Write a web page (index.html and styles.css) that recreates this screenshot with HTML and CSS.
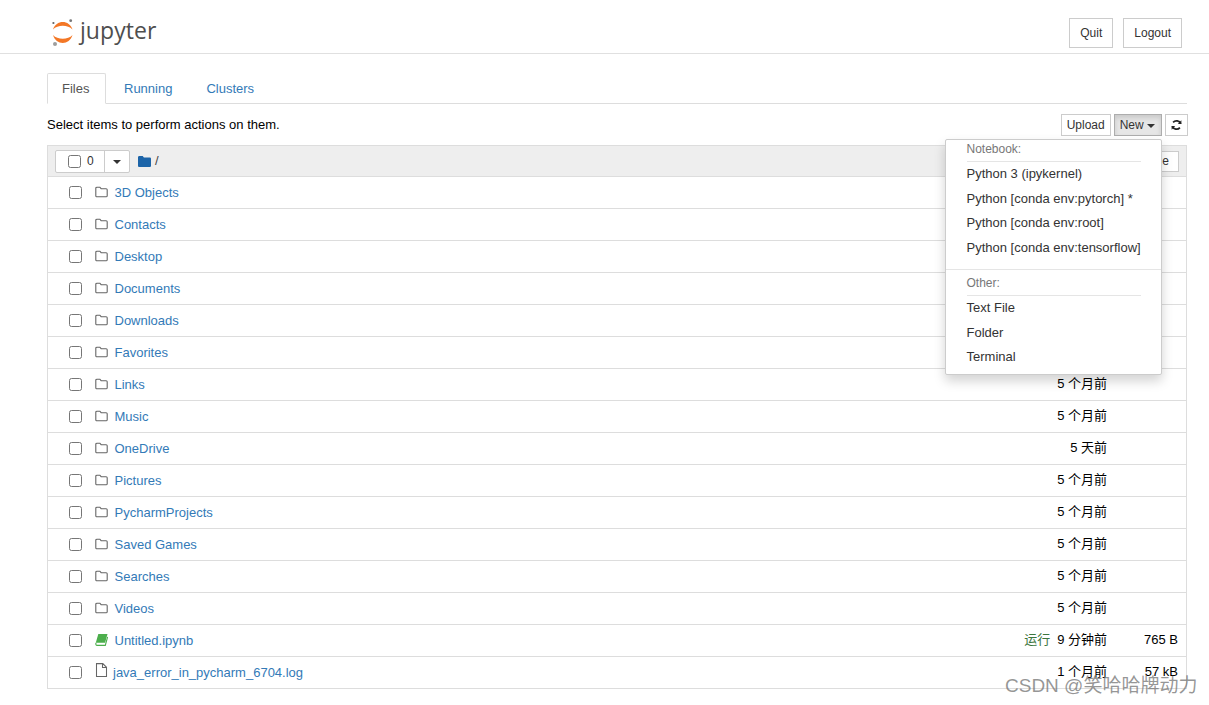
FILE: index.html
```html
<!DOCTYPE html>
<html lang="en">
<head>
<meta charset="utf-8">
<title>Home</title>
<link rel="stylesheet" href="styles.css">
</head>
<body>
<svg class="defs" width="0" height="0" aria-hidden="true">
  <symbol id="folder" viewBox="0 0 13 12"><path d="M2 1.200h2.900l1.200 1.500h5c.6 0 1.100.5 1.100 1.100v5.900c0 .6-.5 1.100-1.100 1.100H2c-.7 0-1.200-.5-1.200-1.100V2.300c0-.6.5-1.100 1.200-1.100z" fill="none" stroke="#666" stroke-width="1.100"/></symbol>
</svg>
<header class="topbar">
  <div class="logo">
    <svg class="logo-mark" width="24" height="30" viewBox="0 0 24 30" aria-hidden="true">
      <path d="M1 12.500C4 2.500 17.500 2.500 20.500 12.500 16 7.500 5.500 7.500 1 12.500z" fill="#f37726"/>
      <path d="M1 18C5.500 23 16 23 20.500 18 17.500 28.500 4 28.500 1 18z" fill="#f37726"/>
      <circle cx="18.700" cy="3.700" r="1.400" fill="#767677"/>
      <circle cx="1.400" cy="6" r="1.100" fill="#616262"/>
      <circle cx="3" cy="27" r="2" fill="#9e9e9e"/>
    </svg>
    <span class="logo-text">jupyter</span>
  </div>
  <div class="top-actions">
    <button class="btn btn-top">Quit</button>
    <button class="btn btn-top">Logout</button>
  </div>
</header>
<main class="page">
  <nav class="tabs">
    <a class="tab tab-active">Files</a>
    <a class="tab">Running</a>
    <a class="tab">Clusters</a>
  </nav>
  <div class="toolbar">
    <span>Select items to perform actions on them.</span>
    <div class="tools">
      <button class="btn btn-small">Upload</button>
      <button class="btn btn-small btn-open">New <i class="caret"></i></button>
      <button class="btn btn-small btn-icon" aria-label="Refresh">
        <svg width="12" height="12" viewBox="0 0 12 12" aria-hidden="true"><path d="M10.600 4.600A4.900 4.900 0 0 0 2.300 3.100" fill="none" stroke="#222" stroke-width="1.900"/><path d="M11.300.9v3.900H7.400z" fill="#222"/><path d="M1.400 7.400a4.900 4.900 0 0 0 8.300 1.500" fill="none" stroke="#222" stroke-width="1.900"/><path d="M.7 11.100V7.200h3.900z" fill="#222"/></svg>
      </button>
      <div class="menu">
        <div class="menu-head">Notebook:</div>
        <a class="menu-item">Python 3 (ipykernel)</a>
        <a class="menu-item">Python [conda env:pytorch] *</a>
        <a class="menu-item">Python [conda env:root]</a>
        <a class="menu-item">Python [conda env:tensorflow]</a>
        <div class="menu-divider"></div>
        <div class="menu-head">Other:</div>
        <a class="menu-item">Text File</a>
        <a class="menu-item">Folder</a>
        <a class="menu-item">Terminal</a>
      </div>
    </div>
  </div>
  <section class="list">
    <div class="list-head">
      <div class="select-group">
        <label class="select-count"><i class="check"></i><span>0</span></label>
        <span class="select-caret"><i class="caret"></i></span>
      </div>
      <svg class="crumb-icon" width="13" height="11" viewBox="0 0 13 11" aria-hidden="true"><path d="M1.300 0h3.400l1.200 1.500h5.800c.7 0 1.300.6 1.300 1.200v7c0 .7-.6 1.300-1.300 1.300H1.300C.6 11 0 10.400 0 9.700V1.300C0 .6.600 0 1.300 0z" fill="#1c64a8"/></svg>
      <span class="crumb">/</span>
      <span class="sort-name">Size</span>
    </div>
    <div class="row"><i class="check"></i><svg class="ico"><use href="#folder"/></svg><a class="name">3D Objects</a></div>
    <div class="row"><i class="check"></i><svg class="ico"><use href="#folder"/></svg><a class="name">Contacts</a></div>
    <div class="row"><i class="check"></i><svg class="ico"><use href="#folder"/></svg><a class="name">Desktop</a></div>
    <div class="row"><i class="check"></i><svg class="ico"><use href="#folder"/></svg><a class="name">Documents</a></div>
    <div class="row"><i class="check"></i><svg class="ico"><use href="#folder"/></svg><a class="name">Downloads</a></div>
    <div class="row"><i class="check"></i><svg class="ico"><use href="#folder"/></svg><a class="name">Favorites</a></div>
    <div class="row"><i class="check"></i><svg class="ico"><use href="#folder"/></svg><a class="name">Links</a><span class="date">5 个月前</span><span class="size"></span></div>
    <div class="row"><i class="check"></i><svg class="ico"><use href="#folder"/></svg><a class="name">Music</a><span class="date">5 个月前</span><span class="size"></span></div>
    <div class="row"><i class="check"></i><svg class="ico"><use href="#folder"/></svg><a class="name">OneDrive</a><span class="date">5 天前</span><span class="size"></span></div>
    <div class="row"><i class="check"></i><svg class="ico"><use href="#folder"/></svg><a class="name">Pictures</a><span class="date">5 个月前</span><span class="size"></span></div>
    <div class="row"><i class="check"></i><svg class="ico"><use href="#folder"/></svg><a class="name">PycharmProjects</a><span class="date">5 个月前</span><span class="size"></span></div>
    <div class="row"><i class="check"></i><svg class="ico"><use href="#folder"/></svg><a class="name">Saved Games</a><span class="date">5 个月前</span><span class="size"></span></div>
    <div class="row"><i class="check"></i><svg class="ico"><use href="#folder"/></svg><a class="name">Searches</a><span class="date">5 个月前</span><span class="size"></span></div>
    <div class="row"><i class="check"></i><svg class="ico"><use href="#folder"/></svg><a class="name">Videos</a><span class="date">5 个月前</span><span class="size"></span></div>
    <div class="row"><i class="check"></i>
      <svg class="ico" viewBox="0 0 13 12" aria-hidden="true"><path d="M3.300 0h9.200l-2.400 8.800H.8z" fill="#4cae4c"/><path d="M1 8.800c-.5 1.500.1 2.600 1.100 2.600h8.200l2.300-8.400" fill="none" stroke="#4cae4c" stroke-width="1.100"/></svg>
      <a class="name">Untitled.ipynb</a><span class="running">运行</span><span class="date">9 分钟前</span><span class="size">765 B</span></div>
    <div class="row"><i class="check"></i>
      <svg class="ico ico-file" viewBox="0 0 12 14" aria-hidden="true"><path d="M1 .6h6.300L11 4.300v9.100H1zM7 .8v3.700h3.800" fill="none" stroke="#666" stroke-width="1.050"/></svg>
      <a class="name name-file">java_error_in_pycharm_6704.log</a><span class="date">1 个月前</span><span class="size">57 kB</span></div>
  </section>
</main>
<div class="watermark">CSDN @笑哈哈牌动力</div>
</body>
</html>
```
FILE: styles.css
```css
* { box-sizing: border-box; }
html, body { margin: 0; height: 705px; overflow: hidden; }
body {
  position: relative;
  background: #fff;
  color: #000;
  font: 13px/18px "Liberation Sans", "Noto Sans CJK SC", sans-serif;
}
.defs { position: absolute; }
.topbar {
  height: 54px;
  padding: 18px 27px 0 52px;
  border-bottom: 1px solid #e0e0e0;
  display: flex;
  justify-content: space-between;
  align-items: flex-start;
}
.logo { display: flex; align-items: center; height: 30px; margin-top: -1px; }
.logo-mark { display: block; flex: none; }
.logo-text {
  margin-left: 4px;
  font: 23px/30px "Open Sans", sans-serif;
  letter-spacing: .05px;
  color: #4e4e4e;
  position: relative;
  top: -2px;
}
.top-actions { display: flex; gap: 10px; }
.btn {
  background: #fff;
  border: 1px solid #ccc;
  color: #333;
  font: inherit;
  padding: 0;
  margin: 0;
}
.btn-top { height: 30px; padding: 0 10px; font-size: 12px; }
.page { margin: 0 22px 0 47px; padding-top: 19px; }
.tabs {
  display: flex;
  height: 31px;
  border-bottom: 1px solid #ddd;
  color: #337ab7;
}
.tab { padding: 7px 17px 0; height: 30px; }
.tab-active {
  height: 31px;
  width: 59px;
  padding: 6px 0 0 14px;
  margin-right: 1px;
  color: #555;
  background: #fff;
  border: 1px solid #ddd;
  border-bottom-color: #fff;
  border-radius: 2px 2px 0 0;
}
.toolbar {
  height: 41px;
  display: flex;
  justify-content: space-between;
  align-items: center;
  padding-top: 1px;
}
.tools { position: relative; display: flex; gap: 3px; margin-right: -1px; align-items: center; }
.btn-small { height: 22px; padding: 0 5px; font-size: 12px; line-height: 18px; }
.btn-open { padding-right: 6px; background: #e6e6e6; border-color: #adadad; box-shadow: inset 0 3px 5px rgba(0,0,0,.125); }
.btn-icon { width: 23px; display: flex; align-items: center; justify-content: center; }
.caret {
  display: inline-block;
  width: 0;
  height: 0;
  vertical-align: middle;
  border-top: 4px solid #333;
  border-left: 4px solid transparent;
  border-right: 4px solid transparent;
}
.menu {
  position: absolute;
  z-index: 2;
  top: 25px;
  right: 26px;
  width: 217px;
  height: 236px;
  padding: 1px 20px 0 20.500px;
  background: #fff;
  border: 1px solid #ccc;
  border-radius: 2px;
  box-shadow: 0 6px 12px rgba(0,0,0,.175);
  color: #333;
}
.menu-head {
  height: 21px;
  font-size: 12px;
  line-height: 16px;
  color: #777;
  border-bottom: 1px solid #e5e5e5;
}
.menu-item { display: block; height: 24.500px; line-height: 23px; white-space: nowrap; }
.menu-divider { height: 1px; margin: 9px -20px 5px -20.500px; background: #e5e5e5; }
.list { border: 1px solid #ddd; border-top: 0; }
.list-head {
  height: 32px;
  padding-left: 7px;
  display: flex;
  align-items: center;
  background: #eee;
  border-top: 1px solid #ddd;
  border-bottom: 1px solid #ddd;
}
.select-group {
  display: flex;
  height: 23px;
  background: #fff;
  border: 1px solid #ccc;
  border-radius: 2px;
  color: #333;
  font-size: 12px;
}
.select-count { display: flex; align-items: center; gap: 6px; width: 49px; padding-left: 12px; border-right: 1px solid #ccc; }
.select-caret { width: 24px; display: flex; align-items: center; justify-content: center; padding-top: 1px; }
.crumb-icon { margin-left: 8px; }
.crumb { margin-left: 4px; color: #444; }
.sort-name {
  margin-left: auto;
  margin-right: 7px;
  height: 21px;
  width: 40px;
  text-align: right;
  padding-right: 9px;
  background: #fff;
  border: 1px solid #ccc;
  color: #333;
  font-size: 12px;
  line-height: 19px;
}
.check {
  display: block;
  flex: none;
  width: 13px;
  height: 13px;
  background: #fff;
  border: 1px solid #767676;
  border-radius: 2.500px;
}
.row {
  height: 32px;
  padding: 0 8px 0 21px;
  display: flex;
  align-items: center;
  border-bottom: 1px solid #ddd;
}
.row:last-child { height: 31px; border-bottom: 0; }
.ico { display: block; flex: none; width: 13px; height: 12px; margin: -2px 0 0 13px; }
.ico-file { height: 14px; margin-top: -5px; margin-right: -1px; }
.name { margin-left: 6.500px; color: #337ab7; }
.name-file { margin-left: 6px; }
.running { margin-left: auto; margin-top: -2px; color: #3c763d; padding-right: 7px; }
.date { text-align: right; margin-top: -2px; }
.row > .name + .date { margin-left: auto; }
.size { width: 71px; text-align: right; margin-top: -2px; }
.watermark {
  position: absolute;
  z-index: 3;
  left: 1005px;
  top: 675px;
  color: rgba(110,110,110,.72);
  font-size: 19px;
  line-height: 22px;
  white-space: nowrap;
}
```
